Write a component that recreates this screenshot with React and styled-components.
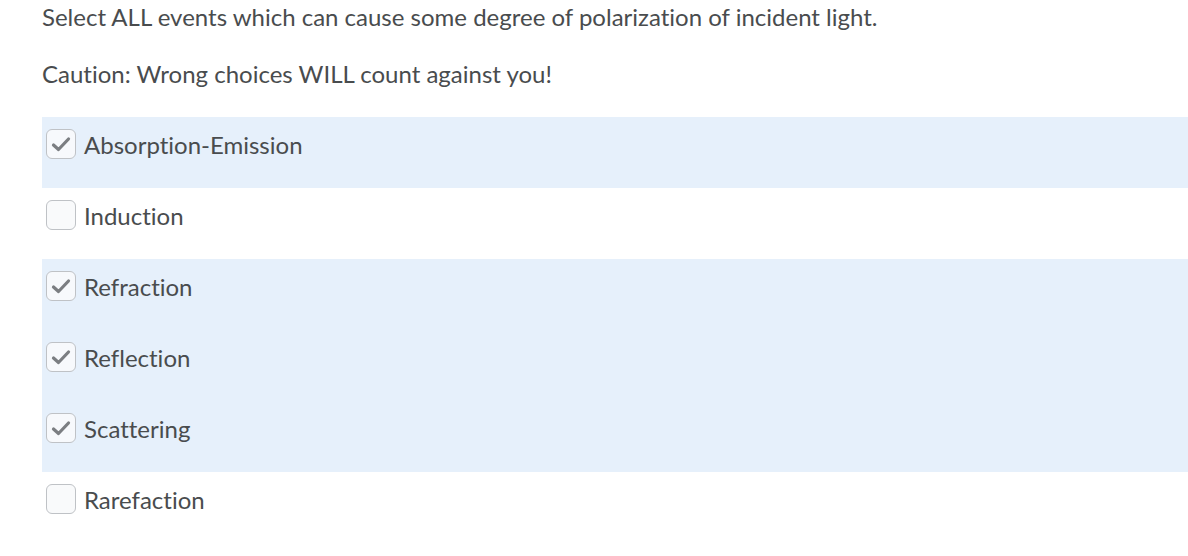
import React from 'react';
import styled, { createGlobalStyle } from 'styled-components';

const GlobalStyle = createGlobalStyle`
    body {
        margin: 0;
        background: #ffffff;
        font-family: Lato, "Noto Sans", sans-serif;
        font-variant-ligatures: none;
        color: #494c4e;
    }
`;

const Container = styled.div`
    padding: 0px 0px 0px 42px;
`;

const Prompt = styled.p`
    margin: 0;
    font-size: 24px;
    line-height: 34px;
`;

const Caution = styled(Prompt)`
    margin-top: 23px;
`;

const Choices = styled.div`
    margin-top: 26px;
    display: flex;
    flex-direction: column;
`;

const Choice = styled.label`
    box-sizing: border-box;
    display: flex;
    align-items: center;
    gap: 8px;
    height: 71px;
    padding: 0px 0px 17px 4px;
    font-size: 24px;
    background-color: ${({ checked }) => (checked ? '#e6f0fb' : 'transparent')};
`;

const Box = styled.span`
    box-sizing: border-box;
    flex-shrink: 0;
    width: 30px;
    height: 30px;
    border: 1px solid #bfc2c6;
    border-radius: 6px;
    background-color: ${({ checked }) => (checked ? '#f7f9fc' : '#f9fafb')};
    display: flex;
    align-items: center;
    justify-content: center;
`;

const choices = [
    { label: 'Absorption-Emission', checked: true },
    { label: 'Induction', checked: false },
    { label: 'Refraction', checked: true },
    { label: 'Reflection', checked: true },
    { label: 'Scattering', checked: true },
    { label: 'Rarefaction', checked: false },
];

const Check = () => (
    <svg width="22" height="22" viewBox="0 0 22 22">
        <path d="M3.5 12 L8.5 16.5 L18.5 6" fill="none" stroke="#7b7e82" strokeWidth="3.2" strokeLinecap="round" strokeLinejoin="round" />
    </svg>
);

const App = () => {
    return (
        <Container>
            <GlobalStyle />
            <Prompt>Select ALL events which can cause some degree of polarization of incident light.</Prompt>
            <Caution>Caution: Wrong choices WILL count against you!</Caution>
            <Choices>
                {choices.map((c) => (
                    <Choice key={c.label} checked={c.checked}>
                        <Box checked={c.checked}>{c.checked && <Check />}</Box>
                        {c.label}
                    </Choice>
                ))}
            </Choices>
        </Container>
    );
};

export default App;
